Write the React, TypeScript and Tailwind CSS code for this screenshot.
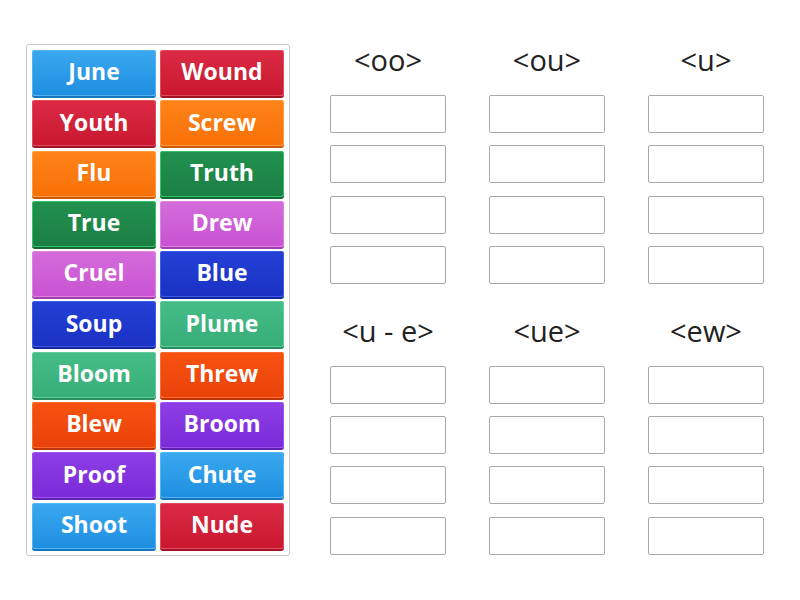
const tiles: { word: string; tone: string }[] = [
  { word: "June", tone: "sky" },
  { word: "Wound", tone: "red" },
  { word: "Youth", tone: "red" },
  { word: "Screw", tone: "orange" },
  { word: "Flu", tone: "orange" },
  { word: "Truth", tone: "green" },
  { word: "True", tone: "green" },
  { word: "Drew", tone: "orchid" },
  { word: "Cruel", tone: "orchid" },
  { word: "Blue", tone: "navy" },
  { word: "Soup", tone: "navy" },
  { word: "Plume", tone: "teal" },
  { word: "Bloom", tone: "teal" },
  { word: "Threw", tone: "flame" },
  { word: "Blew", tone: "flame" },
  { word: "Broom", tone: "purple" },
  { word: "Proof", tone: "purple" },
  { word: "Chute", tone: "sky" },
  { word: "Shoot", tone: "sky" },
  { word: "Nude", tone: "red" },
];

const toneClass: Record<string, string> = {
  sky: "bg-linear-to-b from-[#3aa9f0] to-[#1d8ee0] shadow-[inset_0_0_0_1px_#4fb5f3,0_2px_0_#1775bd]",
  red: "bg-linear-to-b from-[#dc2a44] to-[#c8172f] shadow-[inset_0_0_0_1px_#e24a5e,0_2px_0_#a11226]",
  orange: "bg-linear-to-b from-[#ff8418] to-[#f77006] shadow-[inset_0_0_0_1px_#ff9a40,0_2px_0_#cc5a04]",
  green: "bg-linear-to-b from-[#21914f] to-[#1b7f44] shadow-[inset_0_0_0_1px_#2fc465,0_2px_0_#146636]",
  orchid: "bg-linear-to-b from-[#d46cdb] to-[#c952d2] shadow-[inset_0_0_0_1px_#dd84e3,0_2px_0_#a63cae]",
  navy: "bg-linear-to-b from-[#2440d6] to-[#1a32c4] shadow-[inset_0_0_0_1px_#3f5ae6,0_2px_0_#14279c]",
  teal: "bg-linear-to-b from-[#46bd88] to-[#37ad78] shadow-[inset_0_0_0_1px_#5fcb99,0_2px_0_#2a8d60]",
  flame: "bg-linear-to-b from-[#f85210] to-[#e8420a] shadow-[inset_0_0_0_1px_#ff6a2e,0_2px_0_#bb3406]",
  purple: "bg-linear-to-b from-[#8d3ee6] to-[#7a2ad8] shadow-[inset_0_0_0_1px_#9c55ee,0_2px_0_#6020b0]",
};

const groups = [
  ["<oo>", "<ou>", "<u>"],
  ["<u - e>", "<ue>", "<ew>"],
];

function Slot() {
  return <div className="h-[38px] w-[116px] rounded-[2px] border border-[#a9a9a9] bg-white" />;
}

export default function App() {
  return (
    <div className="flex h-[600px] w-[800px] bg-white" style={{ fontFamily: '"Open Sans", sans-serif' }}>
      <div className="ml-[26px] mt-[44px] h-[512px] w-[264px] rounded-[3px] border border-[#c9c9c9] p-[5px]">
        <div className="grid grid-cols-2 gap-x-[4px] gap-y-[4.3px]">
          {tiles.map((t) => (
            <div
              key={t.word}
              className={`flex h-[46px] items-center justify-center rounded-[3px] pb-[3px] text-[23px] font-bold text-white ${toneClass[t.tone]}`}
            >
              {t.word}
            </div>
          ))}
        </div>
      </div>

      <div className="ml-[40px] mt-[44px] flex flex-col">
        {groups.map((heads, gi) => (
          <div key={gi} className={gi ? "mt-[31px]" : ""}>
            <div className="grid grid-cols-[116px_116px_116px] gap-x-[43px]">
              {heads.map((h) => (
                <div
                  key={h}
                  className={`flex h-[34px] items-center justify-center text-[29px] leading-none text-[#222] ${gi ? "pb-[2px]" : "pb-[4px]"}`}
                >
                  {h}
                </div>
              ))}
            </div>
            <div className="mt-[17px] grid grid-cols-[116px_116px_116px] gap-x-[43px] gap-y-[12.3px]">
              {Array.from({ length: 12 }).map((_, i) => (
                <Slot key={i} />
              ))}
            </div>
          </div>
        ))}
      </div>
    </div>
  );
}
